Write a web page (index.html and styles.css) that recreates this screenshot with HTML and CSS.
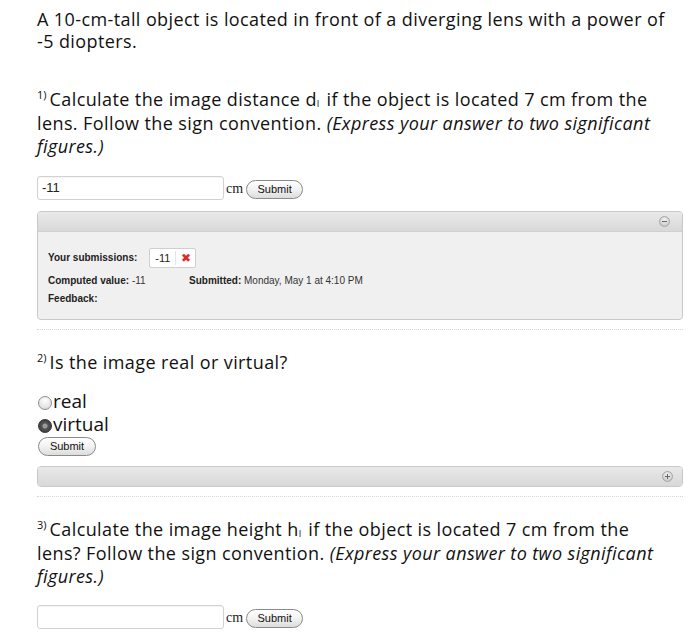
FILE: index.html
```html
<!DOCTYPE html>
<html>
<head>
<meta charset="utf-8">
<link rel="stylesheet" href="styles.css">
</head>
<body>
<div class="page">
  <p class="intro">A 10-cm-tall object is located in front of a diverging lens with a power of -5 diopters.</p>

  <p class="q q1"><span class="num">1)</span>Calculate the image distance d<sub>I</sub> if the object is located 7 cm from the lens. Follow the sign convention. <em>(Express your answer to two significant figures.)</em></p>

  <div class="answer a1">
    <input class="field" type="text" value="-11">
    <span class="unit">cm</span>
    <button class="btn">Submit</button>
  </div>

  <div class="panel open">
    <div class="panel-head"><span class="toggle minus"></span></div>
    <div class="panel-body">
      <div class="row sub-row"><b>Your submissions:</b><span class="subbox"><span class="subval">-11</span><span class="subx">&#x2716;</span></span></div>
      <div class="row"><span class="col1"><b>Computed value:</b> -11</span><span><b>Submitted:</b> Monday, May 1 at 4:10 PM</span></div>
      <div class="row"><b>Feedback:</b></div>
    </div>
  </div>
  <div class="divider d1"></div>

  <p class="q q2"><span class="num">2)</span>Is the image real or virtual?</p>
  <div class="choices">
    <label class="choice"><span class="radio"></span>real</label>
    <label class="choice"><span class="radio checked"></span>virtual</label>
  </div>
  <button class="btn btn2">Submit</button>

  <div class="panel closed">
    <div class="panel-head"><span class="toggle plus"></span></div>
  </div>
  <div class="divider d2"></div>

  <p class="q q3"><span class="num">3)</span>Calculate the image height h<sub>I</sub> if the object is located 7 cm from the lens? Follow the sign convention. <em>(Express your answer to two significant figures.)</em></p>

  <div class="answer a3">
    <input class="field" type="text" value="">
    <span class="unit">cm</span>
    <button class="btn">Submit</button>
  </div>
</div>
</body>
</html>
```

FILE: styles.css
```css
html, body {
  margin: 0;
  padding: 0;
  background: #fff;
}
.page {
  width: 646px;
  margin-left: 37px;
  padding-top: 8px;
  font-family: "Open Sans", "Noto Sans", sans-serif;
  color: #111;
}
.intro {
  margin: 0;
  width: 632px;
  font-size: 18px;
  letter-spacing: 0.4px;
  line-height: 22px;
}
.q {
  margin: 0;
  width: 636px;
  font-size: 18px;
  letter-spacing: 0.4px;
  line-height: 23.5px;
}
.q1 { margin-top: 36px; }
.q2 { margin-top: 21px; }
.q3 { margin-top: 21px; }
.num {
  font-size: 11px;
  letter-spacing: 0;
  line-height: 0;
  vertical-align: 7px;
  margin-right: 3px;
}
sub {
  font-size: 9px;
  vertical-align: -1px;
  line-height: 0;
  letter-spacing: 0;
  margin-right: 2px;
}
em { font-style: italic; }
.answer {
  display: flex;
  align-items: center;
  height: 24px;
}
.a1 { margin-top: 17px; }
.a3 { margin-top: 16px; }
.field {
  box-sizing: border-box;
  width: 187px;
  height: 24px;
  margin: 0;
  border: 1px solid #d2d2d2;
  border-radius: 3px;
  padding: 0 4px;
  font-family: "Liberation Sans", Arial, sans-serif;
  font-size: 13px;
  color: #222;
  background: #fff;
  box-shadow: inset 0 1px 1px rgba(0,0,0,0.05);
}
.unit {
  font-family: "Liberation Serif", "Times New Roman", serif;
  font-size: 14px;
  margin: 2px 3px 0 2px;
  color: #222;
}
.btn {
  box-sizing: border-box;
  height: 19px;
  padding: 0 10px;
  border: 1px solid #8a8a8a;
  border-radius: 10px;
  background: linear-gradient(#ffffff, #f2f2f2 50%, #dcdcdc);
  font-family: "Liberation Sans", Arial, sans-serif;
  font-size: 11px;
  color: #111;
  line-height: 17px;
}
.a1 .btn, .a3 .btn { width: 57px; margin-top: 3px; }
.btn2 {
  display: block;
  width: 58px;
  margin: 1px 0 0 1px;
}
.panel {
  box-sizing: border-box;
  border: 1px solid #c9c9c9;
  border-radius: 4px;
  background: #f0f0f0;
  overflow: hidden;
}
.panel.open { margin-top: 11px; height: 109px; }
.panel.closed { margin-top: 10px; height: 21px; }
.panel-head {
  height: 19px;
  background: linear-gradient(#e9e9e9, #d8d8d8);
  border-bottom: 1px solid #d0d0d0;
  display: flex;
  justify-content: flex-end;
  align-items: center;
  padding-right: 12px;
}
.closed .panel-head {
  border-bottom: none;
  height: 19px;
  padding-right: 9px;
}
.toggle {
  position: relative;
  width: 11px;
  height: 11px;
  border-radius: 50%;
  border: 1px solid #a6a6a6;
  background: radial-gradient(circle at 50% 35%, #f4f4f4, #bdbdbd);
  box-sizing: border-box;
}
.toggle::before, .plus::after {
  content: "";
  position: absolute;
  background: #666;
}
.toggle::before {
  left: 2px; right: 2px; top: 4px; height: 1px;
}
.plus::after {
  top: 2px; bottom: 2px; left: 4px; width: 1px;
}
.panel-body {
  padding: 16px 0 0 10px;
  font-family: "Liberation Sans", Arial, sans-serif;
  font-size: 10px;
  color: #333;
}
.panel-body b { color: #222; font-weight: bold; }
.row {
  display: flex;
  align-items: center;
  height: 18px;
}
.sub-row { height: 20px; margin-bottom: 4px; }
.col1 { width: 141px; }
.subbox {
  display: inline-flex;
  align-items: center;
  height: 20px;
  box-sizing: border-box;
  margin-left: 12px;
  border: 1px solid #cfcfcf;
  border-radius: 2px;
  background: #fff;
  padding: 0 4px 0 5px;
}
.subval {
  font-size: 11px;
  color: #222;
  padding-right: 5px;
  border-right: 1px solid #e4e4e4;
  line-height: 14px;
}
.subx {
  color: #e0282c;
  font-size: 12px;
  margin-left: 5px;
}
.divider {
  height: 0;
  border-top: 1px dotted #d6d6d6;
}
.d1 { margin-top: 9px; }
.d2 { margin-top: 9px; }
.choices { margin-top: 16px; }
.choice {
  display: flex;
  align-items: center;
  font-size: 19px;
  line-height: 23px;
  height: 23px;
}
.radio {
  box-sizing: border-box;
  width: 14px;
  height: 14px;
  border-radius: 50%;
  border: 1px solid #8e8e8e;
  background: radial-gradient(circle at 50% 30%, #ffffff, #d4d4d4);
  margin: 2px 1px 0 1px;
}
.radio.checked {
  border: 1px solid #333;
  background: radial-gradient(circle, #9a9a9a 0 2px, #555 3px, #3a3a3a 7px);
}
```
